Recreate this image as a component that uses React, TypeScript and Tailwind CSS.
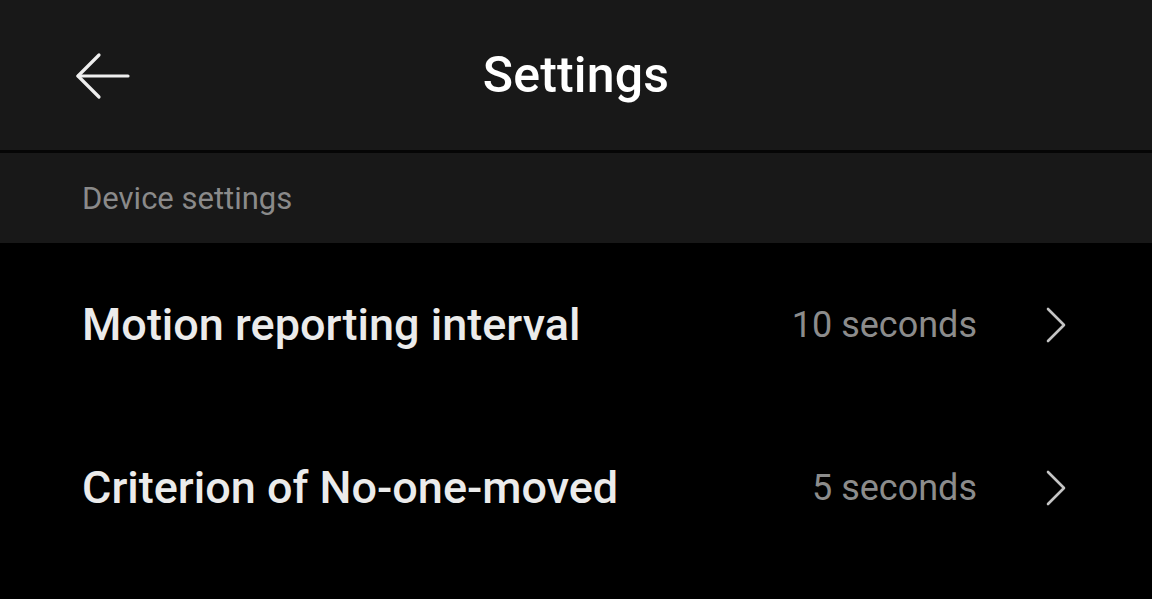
const rows = [
  { label: "Motion reporting interval", value: "10 seconds" },
  { label: "Criterion of No-one-moved", value: "5 seconds" },
]

function Chevron() {
  return (
    <svg width="22" height="38" viewBox="0 0 22 38" fill="none" stroke="currentColor" strokeWidth="2.6" strokeLinecap="round" strokeLinejoin="round" className="ml-[68px] text-[#c4c4c4]">
      <path d="M3 3 L19 19 L3 35" />
    </svg>
  )
}

export default function App() {
  return (
    <div
      className="h-[599px] w-full overflow-hidden bg-black text-white"
      style={{ fontFamily: "Roboto, 'Noto Sans', sans-serif" }}
    >
      {/* Top bar */}
      <header className="relative flex h-[150px] items-center justify-center bg-[#181818]">
        <button className="absolute left-[74px] top-[52px] text-[#eeeeee]">
          <svg width="58" height="48" viewBox="0 0 58 48" fill="none" stroke="currentColor" strokeWidth="3.2" strokeLinecap="round" strokeLinejoin="round">
            <path d="M4 24 H54" />
            <path d="M25 3 L4 24 L25 45" />
          </svg>
        </button>
        <h1 className="text-[50px] font-medium leading-none tracking-[0.2px] text-white">Settings</h1>
      </header>
      <div className="h-[3px] bg-[#050505]" />

      {/* Section label */}
      <div className="flex h-[90px] items-center bg-[#181818] px-[82px]">
        <span className="text-[31px] leading-none text-[#8a8a8a]">Device settings</span>
      </div>

      {/* Rows */}
      {rows.map((row) => (
        <div key={row.label} className="flex h-[163px] items-center pl-[82px] pr-[85px]">
          <span className="flex-1 text-[45px] font-medium leading-none text-[#ebebeb]">{row.label}</span>
          <span className="text-[36px] leading-none text-[#8c8c8c]">{row.value}</span>
          <Chevron />
        </div>
      ))}
    </div>
  )
}
